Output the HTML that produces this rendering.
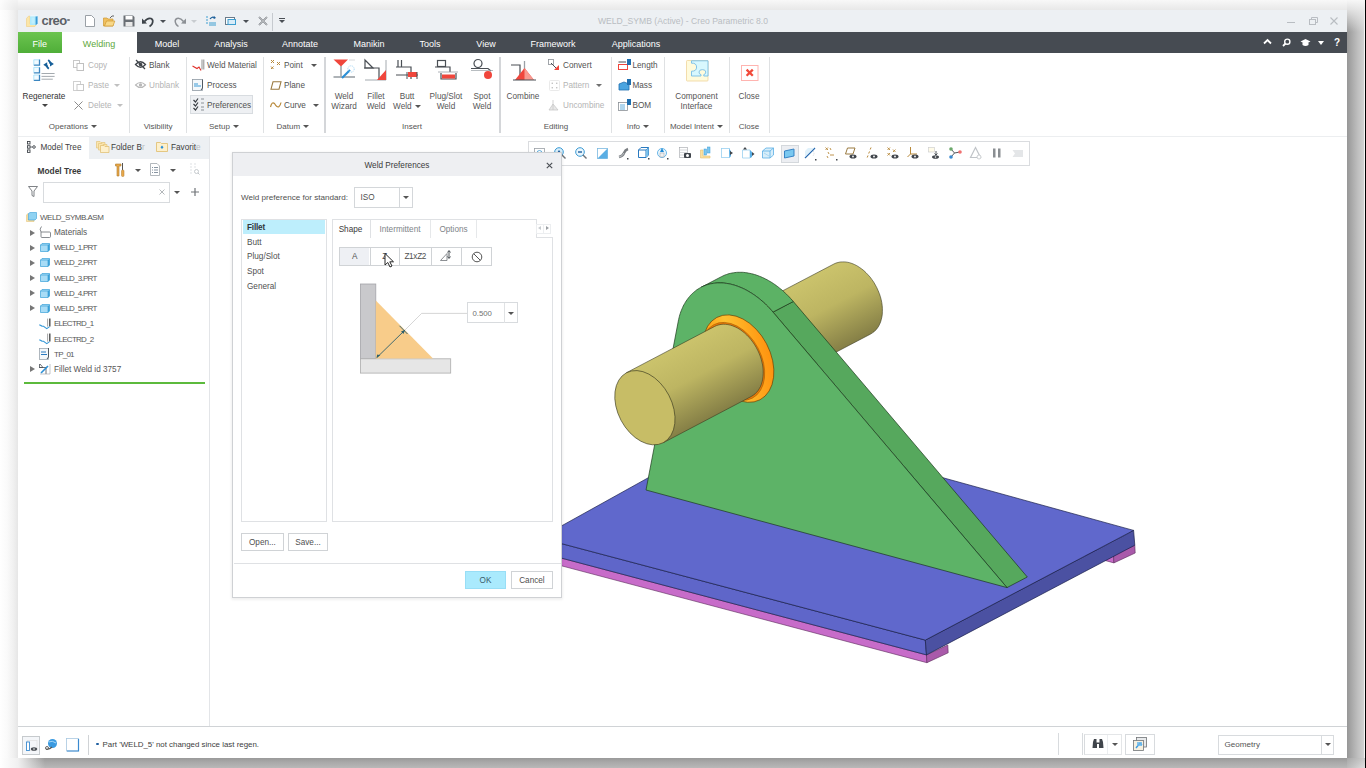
<!DOCTYPE html>
<html><head><meta charset="utf-8">
<style>
*{box-sizing:border-box;margin:0;padding:0}
html,body{width:1366px;height:768px;overflow:hidden;background:#fff}
body{font-family:"Liberation Sans",sans-serif;font-size:8px;color:#333;position:relative}
.a{position:absolute;white-space:nowrap}
svg{position:absolute;overflow:visible}
#bgtop{left:0;top:0;width:1366px;height:10px;background:linear-gradient(#f8f8f8,#e8e8e8)}
#bgleft{left:0;top:0;width:18px;height:768px;background:linear-gradient(90deg,#ffffff,#fafafa 40%,#f0f0f0 75%,#e6e6e6)}
#bgtl{left:0;top:0;width:18px;height:10px;background:radial-gradient(circle at 100% 100%,#e8e8e8,#f2f2f2 45%,#fcfcfc 90%)}
#bgright{left:1347px;top:0;width:18px;height:758px;background:linear-gradient(rgba(247,247,247,1),rgba(235,235,235,0.85) 10px,rgba(200,200,200,0) 32px),linear-gradient(90deg,#969696,#a8a8a8 25%,#bfbfbf 60%,#d0d0d0 92%,#f4f4f4 97%,#fff)}
#bgtr{display:none}
#bgblack{left:1365px;top:0;width:1px;height:768px;background:#000}
#bgbot{left:18px;top:758px;width:1329px;height:10px;background:linear-gradient(#9a9a9a,#a8a8a8 40%,#b8b8b8)}
#bgbotl{left:0;top:758px;width:45px;height:10px;background:linear-gradient(90deg,#fff,#f0f0f0 40%,rgba(240,240,240,0))}
#bgbr{left:1347px;top:758px;width:18px;height:10px;background:linear-gradient(135deg,#a8a8a8,#c8c8c8 60%,#e0e0e0)}
.tab{top:32px;height:21px;line-height:25px;color:#fff;font-size:9px;text-align:center}
.sep{width:1px;background:#dfe1e3;top:57px;height:76px}
.gl{color:#555;font-size:8px;text-align:center;top:121.5px;height:10px;line-height:10px}
.t{color:#525252;font-size:8.2px;line-height:10px;height:10px;margin-top:0.8px}
.dis{color:#b4b4b4}
.cap{color:#555;font-size:8.2px;line-height:10px;text-align:center;margin-top:0.9px}
.dd{width:0;height:0;border-left:3px solid transparent;border-right:3px solid transparent;border-top:3px solid #555}
</style></head><body>
<div class="a" id="bgtop"></div>
<div class="a" id="bgleft"></div>
<div class="a" id="bgright"></div>
<div class="a" id="bgbot"></div>
<div class="a" id="bgbotl"></div>
<div class="a" id="bgtl"></div>
<div class="a" id="bgtr"></div>
<div class="a" id="bgbr"></div>
<div class="a" id="bgblack"></div>
<!-- window -->
<div class="a" style="left:18px;top:10px;width:1329px;height:748px;background:#fff"></div>
<!-- title bar -->
<div class="a" style="left:18px;top:10px;width:1329px;height:22px;background:#edf0f3"></div>
<svg style="left:26px;top:15px" width="12" height="12" viewBox="0 0 12 12">
 <path d="M0.5 3.5L2.5 1.2H4V9H10V10L8.8 11.5H0.5Z" fill="#fbe6a8" stroke="#f0cc80" stroke-width="0.6"/>
 <path d="M4 1.2H11.5V8.5L10 10H4Z" fill="#aeeafc"/>
 <path d="M9.6 1.2H11.5V8.5L10 10H9.6Z" fill="#3a9ad5"/><path d="M4 1.2L5 0.3H11.5L11 1.2Z" fill="#e8f8ff"/>
 <path d="M6.2 2.5V8.5M7.8 2.5V8.5" stroke="#d8f6ff" stroke-width="0.6"/>
</svg>
<div class="a" style="left:41.5px;top:12.5px;font-size:13px;font-weight:bold;color:#5b6066;letter-spacing:-0.6px;line-height:16px">creo</div><div class="a" style="left:67.3px;top:18.6px;width:2.4px;height:2.4px;border-radius:50%;background:#7a7e83"></div>
<svg style="left:85px;top:15px" width="10" height="12" viewBox="0 0 10 12"><path d="M0.5 0.5 H6.5 L9.5 3.5 V11.5 H0.5 Z" fill="#fff" stroke="#9aa0a6"/></svg>
<svg style="left:103px;top:15px" width="12" height="12" viewBox="0 0 12 12"><path d="M0.5 3 H4 L5 4 H10 V11 H0.5Z" fill="#f0c060" stroke="#d09a30" stroke-width="0.7"/><path d="M1.5 11 L3.5 6 H11.8 L10 11Z" fill="#f8d888" stroke="#d09a30" stroke-width="0.7"/><path d="M7 3 Q9 0 11 1" stroke="#555" fill="none" stroke-width="0.9"/></svg>
<svg style="left:123px;top:15px" width="12" height="12" viewBox="0 0 12 12"><path d="M0.5 0.5 H10 L11.5 2 V11.5 H0.5Z" fill="#6a6f75"/><rect x="2.5" y="1" width="7" height="3.5" fill="#fff"/><rect x="2.5" y="7" width="7" height="4.5" fill="#e8e8e8"/></svg>
<svg style="left:142px;top:16px" width="12" height="12" viewBox="0 0 12 12"><path d="M2.5 5.5Q5.5 1.5 9 2.5Q12 4 10 8Q9 9.5 7.5 10.5" stroke="#3d4349" stroke-width="1.7" fill="none"/><path d="M0 2.5L5 7.5L0 7.8Z" fill="#3d4349"/></svg>
<div class="a dd" style="left:160px;top:20px;border-top-color:#4a4f55"></div>
<svg style="left:174px;top:16px" width="12" height="12" viewBox="0 0 12 12"><path d="M9.5 5.5Q6.5 1.5 3 2.5Q0 4 2 8Q3 9.5 4.5 10.5" stroke="#8d9196" stroke-width="1.5" fill="none"/><path d="M12 2.5L7 7.5L12 7.8Z" fill="#8d9196"/></svg>
<div class="a dd" style="left:191px;top:20px;border-top-color:#c8ccd0"></div>
<svg style="left:205px;top:15px" width="12" height="12" viewBox="0 0 12 12"><path d="M1 2h2M1 5h2M1 8h2M4 10h7M4 8h7" stroke="#3d9ed0" stroke-width="1"/><path d="M5 4 Q7 1 10 3" stroke="#1c5f9a" stroke-width="1.2" fill="none"/><path d="M9 1 L11 3 L8.5 4Z" fill="#1c5f9a"/></svg>
<svg style="left:225px;top:15px" width="12" height="12" viewBox="0 0 12 12"><rect x="0.5" y="2.5" width="9" height="7" fill="#fff" stroke="#6a7b8a"/><rect x="3" y="4.5" width="7.5" height="5" fill="#d8ecf8" stroke="#3d9ed0"/></svg>
<div class="a dd" style="left:243px;top:20px;border-top-color:#4a4f55"></div>
<svg style="left:258px;top:16px" width="10" height="10" viewBox="0 0 10 10"><path d="M1 1L9 9M9 1L1 9" stroke="#6a6f75" stroke-width="1.6"/><path d="M1 1L9 9M9 1L1 9" stroke="#fff" stroke-width="0.5"/></svg>
<div class="a" style="left:272px;top:13px;width:1px;height:18px;background:#c6cacf"></div>
<div class="a" style="left:279px;top:18px;width:6px;height:1px;background:#4a4f55"></div>
<div class="a dd" style="left:279px;top:20px;border-top-color:#4a4f55"></div>
<div class="a" style="left:598px;top:16px;font-size:8.6px;color:#b9bdc2;line-height:11px">WELD_SYMB (Active) - Creo Parametric 8.0</div>
<div class="a" style="left:1287px;top:22px;width:8px;height:1px;background:#b9bdc2"></div>
<svg style="left:1309px;top:17px" width="9" height="8" viewBox="0 0 9 8"><rect x="0.5" y="2.5" width="6" height="5" fill="none" stroke="#b9bdc2"/><path d="M2.5 2.5V0.5H8.5V5.5H6.5" fill="none" stroke="#b9bdc2"/></svg>
<svg style="left:1330px;top:17px" width="8" height="8" viewBox="0 0 8 8"><path d="M0.5 0.5L7.5 7.5M7.5 0.5L0.5 7.5" stroke="#b9bdc2" stroke-width="1.1"/></svg>
<!-- tabs -->
<div class="a" style="left:18px;top:32px;width:1329px;height:21px;background:#464b52"></div>
<div class="a tab" style="left:18px;width:43.5px;background:linear-gradient(#6cc450,#4fae38)">File</div>
<div class="a tab" style="left:61.5px;width:75px;background:#fff;color:#5ea83a">Welding</div>
<div class="a tab" style="left:147px;width:40px">Model</div>
<div class="a tab" style="left:211px;width:40px">Analysis</div>
<div class="a tab" style="left:280px;width:40px">Annotate</div>
<div class="a tab" style="left:349px;width:40px">Manikin</div>
<div class="a tab" style="left:410px;width:40px">Tools</div>
<div class="a tab" style="left:466px;width:40px">View</div>
<div class="a tab" style="left:523px;width:60px">Framework</div>
<div class="a tab" style="left:606px;width:60px">Applications</div>
<svg style="left:1263px;top:38px" width="9" height="7" viewBox="0 0 9 7"><path d="M1 5.5L4.5 2L8 5.5" stroke="#fff" stroke-width="1.8" fill="none"/></svg>
<svg style="left:1282px;top:38px" width="9" height="9" viewBox="0 0 9 9"><circle cx="5.3" cy="3.7" r="2.6" stroke="#fff" stroke-width="1.4" fill="none"/><path d="M3.5 5.5L1 8" stroke="#fff" stroke-width="1.8"/></svg>
<svg style="left:1300px;top:38px" width="11" height="9" viewBox="0 0 11 9"><path d="M0.5 3.5L5.5 1L10.5 3.5L5.5 6Z" fill="#fff"/><path d="M2.5 4.5V7Q5.5 9 8.5 7V4.5" fill="#fff"/></svg>
<div class="a dd" style="left:1318px;top:41px;border-top-color:#fff;border-left-width:3.5px;border-right-width:3.5px;border-top-width:4px"></div>
<div class="a" style="left:1334px;top:36px;font-size:10px;font-weight:bold;color:#fff;line-height:14px">?</div>
<!-- ribbon -->
<div class="a" style="left:18px;top:135.5px;width:1329px;height:1px;background:#eceef0"></div>
<!-- ribbon separators -->
<div class="a sep" style="left:128.5px"></div>
<div class="a sep" style="left:185.5px"></div>
<div class="a sep" style="left:262.5px"></div>
<div class="a sep" style="left:324px;background:#d4d6d9;width:1.5px"></div>
<div class="a sep" style="left:499px;background:#d4d6d9;width:1.5px"></div>
<div class="a sep" style="left:611px"></div>
<div class="a sep" style="left:663.5px"></div>
<div class="a sep" style="left:728.5px"></div>
<div class="a sep" style="left:768.5px"></div>
<!-- Operations -->
<svg style="left:33px;top:59px" width="22" height="22" viewBox="0 0 22 22">
 <g fill="#f2fbff"><rect x="0.8" y="0.6" width="6" height="6"/><rect x="0.8" y="8.2" width="6" height="6"/><rect x="0.8" y="15.8" width="6" height="6"/></g>
 <g fill="none" stroke-width="1.3"><path d="M0.8 6.2H6.5V0.6" stroke="#3b86c0"/><path d="M0.8 13.8H6.5V8.2" stroke="#3b86c0"/><path d="M0.8 21.4H6.5V15.8" stroke="#3b86c0"/></g>
 <g fill="none" stroke="#9fe0fa" stroke-width="0.8"><path d="M0.8 6V0.8H6"/><path d="M0.8 13.6V8.4H6"/><path d="M0.8 21.2V16H6"/></g>
 <path d="M8.5 14.5H21.6M8.5 17.4H21.6M8.5 20.2H19.8" stroke="#9aa0a6" stroke-width="0.9"/>
 <path d="M13.5 6Q14.2 8.6 15.8 9.8" stroke="#17609a" stroke-width="1.9" fill="none"/><path d="M10.3 5.8L14.2 3.2V8.6Z" fill="#17609a"/>
 <path d="M17.5 4.8Q16.8 2.2 15.2 1" stroke="#17609a" stroke-width="1.9" fill="none"/><path d="M20.9 4.9L17 2.3V7.6Z" fill="#17609a"/>
</svg>
<div class="a cap" style="left:14px;top:91px;width:60px;color:#333">Regenerate</div>
<div class="a dd" style="left:41.5px;top:104px;border-top-color:#444"></div>
<svg style="left:73px;top:60px" width="11" height="11" viewBox="0 0 11 11"><rect x="0.5" y="0.5" width="6" height="7" fill="#fff" stroke="#c8c8c8"/><rect x="4" y="3.5" width="6.5" height="7" fill="#fff" stroke="#c0c0c0"/></svg>
<div class="a t dis" style="left:88px;top:60px">Copy</div>
<svg style="left:73px;top:80px" width="11" height="11" viewBox="0 0 11 11"><rect x="0.5" y="1.5" width="7" height="9" fill="#fff" stroke="#d0d0d0"/><rect x="4" y="4.5" width="6.5" height="6" fill="#fff" stroke="#c8c8c8"/></svg>
<div class="a t dis" style="left:88px;top:80.5px">Paste</div>
<div class="a dd" style="left:113.5px;top:84px;border-top-color:#c0c0c0"></div>
<svg style="left:74px;top:101px" width="9" height="9" viewBox="0 0 9 9"><path d="M0.5 0.5L8.5 8.5M8.5 0.5L0.5 8.5" stroke="#8c8c8c" stroke-width="1"/></svg>
<div class="a t dis" style="left:88px;top:100.5px">Delete</div>
<div class="a dd" style="left:117px;top:104px;border-top-color:#c0c0c0"></div>
<div class="a gl" style="left:43px;width:60px">Operations <span style="display:inline-block;width:0;height:0;border-left:3px solid transparent;border-right:3px solid transparent;border-top:3.5px solid #555;vertical-align:middle;margin-left:1px"></span></div>
<!-- Visibility -->
<svg style="left:135px;top:59px" width="11" height="11" viewBox="0 0 11 11"><path d="M0.5 5.5Q5.5 0 10.5 5.5Q5.5 11 0.5 5.5Z" fill="none" stroke="#40454b" stroke-width="1.3"/><circle cx="5.5" cy="5.5" r="1.8" fill="#40454b"/><path d="M1 1L10 10" stroke="#40454b" stroke-width="1.3"/></svg>
<div class="a t" style="left:149px;top:60px">Blank</div>
<svg style="left:135px;top:81px" width="11" height="8" viewBox="0 0 11 8"><path d="M0.5 4Q5.5 -1 10.5 4Q5.5 9 0.5 4Z" fill="none" stroke="#b8b8b8" stroke-width="1.1"/><circle cx="5.5" cy="4" r="1.7" fill="#b8b8b8"/></svg>
<div class="a t dis" style="left:149px;top:80.5px">Unblank</div>
<div class="a gl" style="left:138px;width:40px">Visibility</div>
<!-- Setup -->
<svg style="left:192px;top:59px" width="13" height="12" viewBox="0 0 13 12"><path d="M0.5 7L5 9.5L7 8L9 11.5" stroke="#e0302a" stroke-width="1.1" fill="none"/><path d="M10 0.5V10.5M11.8 0.5V10.5" stroke="#707070" stroke-width="0.8"/></svg>
<div class="a t" style="left:207px;top:60px">Weld Material</div>
<svg style="left:192px;top:79px" width="13" height="12" viewBox="0 0 13 12"><rect x="0.5" y="0.5" width="10" height="11" fill="#f4f8fb" stroke="#909aa3" stroke-width="0.8"/><path d="M2 5H6M2 7H9" stroke="#3a9ad5" stroke-width="1"/><path d="M10.5 0.5V9L9 11" stroke="#505a62" stroke-width="1" fill="none"/></svg>
<div class="a t" style="left:207px;top:80px">Process</div>
<div class="a" style="left:189.5px;top:95px;width:63.5px;height:19px;background:#eef0f3;border:1px solid #d8dce0"></div>
<svg style="left:193px;top:98px" width="12" height="13" viewBox="0 0 12 13"><path d="M0.5 2L2.5 4L5 0.5M0.5 6L2.5 8L5 4.5M0.5 10L2.5 12L5 8.5" stroke="#3a3f45" stroke-width="1.2" fill="none"/><path d="M8 1H11M8 5H11M8 9H11M8 12H11" stroke="#8a9096" stroke-width="1"/></svg>
<div class="a t" style="left:207px;top:100px">Preferences</div>
<div class="a gl" style="left:199px;width:50px">Setup <span style="display:inline-block;width:0;height:0;border-left:3px solid transparent;border-right:3px solid transparent;border-top:3.5px solid #555;vertical-align:middle;margin-left:1px"></span></div>
<!-- Datum -->
<svg style="left:270px;top:59px" width="12" height="12" viewBox="0 0 12 12"><path d="M1 1L4 4M4 1L1 4M7 3L10 6M10 3L7 6M1 7.5L3.5 10M3.5 7.5L1 10" stroke="#b8893a" stroke-width="1"/></svg>
<div class="a t" style="left:284px;top:60px">Point</div>
<div class="a dd" style="left:311px;top:64px;border-top-color:#555"></div>
<svg style="left:270px;top:81px" width="12" height="9" viewBox="0 0 12 9"><path d="M3 0.8H11L9 8.2H1Z" fill="none" stroke="#9a7a40" stroke-width="1.1"/></svg>
<div class="a t" style="left:284px;top:80.5px">Plane</div>
<svg style="left:270px;top:101px" width="12" height="8" viewBox="0 0 12 8"><path d="M0.5 6Q2 0 4.5 2.5Q7 7 9 5.5Q10.5 4 11 1.5" stroke="#b8893a" stroke-width="1.2" fill="none"/></svg>
<div class="a t" style="left:284px;top:100.5px">Curve</div>
<div class="a dd" style="left:312.5px;top:104px;border-top-color:#555"></div>
<div class="a gl" style="left:268px;width:50px">Datum <span style="display:inline-block;width:0;height:0;border-left:3px solid transparent;border-right:3px solid transparent;border-top:3.5px solid #555;vertical-align:middle;margin-left:1px"></span></div>
<!-- Insert -->
<svg style="left:333px;top:59px" width="23" height="22" viewBox="0 0 23 22">
 <path d="M0.5 0.5H15L8 7.5Z" fill="#f0463c"/><path d="M8 7V17.5" stroke="#9aa0a6" stroke-width="1.5"/><path d="M16 1H22" stroke="#d8dadc" stroke-width="1"/>
 <path d="M0.5 18H22" stroke="#9aa0a6" stroke-width="1.6"/><path d="M9 19L17 11" stroke="#2b8fd6" stroke-width="2.2"/><circle cx="18" cy="10" r="3.2" fill="none" stroke="#9fd4f4" stroke-width="1" stroke-dasharray="1 1"/>
</svg>
<div class="a cap" style="left:324px;top:91px;width:40px">Weld<br>Wizard</div>
<svg style="left:364px;top:59px" width="23" height="22" viewBox="0 0 23 22">
 <path d="M1 1V9H9L1 1Z" fill="none" stroke="#4a4f55" stroke-width="1.2"/><path d="M0 9H15V20" fill="none" stroke="#4a4f55" stroke-width="1.2"/>
 <path d="M22 1V21H1" fill="none" stroke="#9aa0a6" stroke-width="0.9"/><path d="M22 11V21H13Z" fill="#f0463c"/>
</svg>
<div class="a cap" style="left:356px;top:91px;width:40px">Fillet<br>Weld</div>
<svg style="left:396px;top:59px" width="23" height="22" viewBox="0 0 23 22">
 <path d="M2 1V8M5.5 1V8M0 8H15V20" fill="none" stroke="#4a4f55" stroke-width="1.2"/><path d="M0 16H22" stroke="#4a4f55" stroke-width="1"/>
 <rect x="12" y="13" width="9" height="5" fill="#f0463c"/><path d="M11 13V20M21 13V20" stroke="#4a4f55" stroke-width="1"/>
</svg>
<div class="a cap" style="left:387px;top:91px;width:40px">Butt<br>Weld <span style="display:inline-block;width:0;height:0;border-left:3px solid transparent;border-right:3px solid transparent;border-top:3.5px solid #555;vertical-align:middle;margin-left:1px"></span></div>
<svg style="left:435px;top:59px" width="23" height="22" viewBox="0 0 23 22">
 <rect x="2.5" y="1.5" width="8" height="6" fill="none" stroke="#4a4f55" stroke-width="1.2"/><path d="M0 8H15V13" fill="none" stroke="#4a4f55" stroke-width="1.2"/>
 <path d="M6 14V20H21V14" fill="none" stroke="#4a4f55" stroke-width="1.2"/><path d="M3 13H23" stroke="#9aa0a6" stroke-width="0.8"/><rect x="7" y="15.5" width="13" height="4" fill="#f0463c"/>
</svg>
<div class="a cap" style="left:426px;top:91px;width:40px">Plug/Slot<br>Weld</div>
<svg style="left:471px;top:59px" width="23" height="22" viewBox="0 0 23 22">
 <circle cx="7" cy="4.5" r="4" fill="none" stroke="#4a4f55" stroke-width="1.2"/><path d="M0 9.5H17L20 12" fill="none" stroke="#4a4f55" stroke-width="1.2"/><path d="M0 11.5H22" stroke="#9aa0a6" stroke-width="0.7"/>
 <circle cx="17" cy="16" r="4" fill="#f0463c"/>
</svg>
<div class="a cap" style="left:462px;top:91px;width:40px">Spot<br>Weld</div>
<div class="a gl" style="left:392px;width:40px">Insert</div>
<!-- Editing -->
<svg style="left:511px;top:61px" width="26" height="20" viewBox="0 0 26 20">
 <path d="M0 4H9V19" fill="none" stroke="#4a4f55" stroke-width="1.2"/><path d="M13.5 0V19" stroke="#9aa0a6" stroke-width="1.3"/>
 <path d="M13.5 7L23 19H4Z" fill="#f0463c"/><path d="M13.5 7L23 19H13.5Z" fill="#f89a90"/><path d="M2 19H25" stroke="#4a4f55" stroke-width="1"/>
</svg>
<div class="a cap" style="left:498px;top:91px;width:50px">Combine</div>
<svg style="left:548px;top:59px" width="12" height="12" viewBox="0 0 12 12"><rect x="0.5" y="0.5" width="5" height="5" fill="#fff" stroke="#8a9096" stroke-width="0.8"/><path d="M3 4L9 10" stroke="#4a4f55" stroke-width="1"/><path d="M6 11H11V6Z" fill="#f0463c"/></svg>
<div class="a t" style="left:563px;top:60px">Convert</div>
<svg style="left:549px;top:79.5px" width="11" height="11" viewBox="0 0 11 11"><rect x="0.5" y="0.5" width="10" height="10" rx="1" fill="none" stroke="#e4e4e4" stroke-width="0.8"/><g fill="#c4c4c4"><rect x="2.6" y="2.6" width="1.4" height="1.4"/><rect x="7" y="2.6" width="1.4" height="1.4"/><rect x="2.6" y="7" width="1.4" height="1.4"/><rect x="7" y="7" width="1.4" height="1.4"/></g></svg>
<div class="a t dis" style="left:563px;top:80.5px">Pattern</div>
<div class="a dd" style="left:596px;top:84px;border-top-color:#707070"></div>
<svg style="left:548px;top:100px" width="12" height="11" viewBox="0 0 12 11"><path d="M5 0V10M5 4L10 10H1Z" fill="#e8e8e8" stroke="#c8c8c8" stroke-width="0.8"/></svg>
<div class="a t dis" style="left:563px;top:100.5px">Uncombine</div>
<div class="a gl" style="left:531px;width:50px">Editing</div>
<!-- Info -->
<svg style="left:618px;top:59px" width="13" height="11" viewBox="0 0 13 11"><rect x="0.5" y="5.5" width="9" height="5" fill="#fff" stroke="#f0463c" stroke-width="1"/><path d="M0.5 3H8" stroke="#4a4f55" stroke-width="1"/><rect x="9" y="0" width="4" height="6" fill="#1f6fb0"/></svg>
<div class="a t" style="left:632.5px;top:60px">Length</div>
<svg style="left:618px;top:79px" width="13" height="12" viewBox="0 0 13 12"><path d="M1 5L6 3L11 5V11H1Z" fill="#4aa4e0" stroke="#1f6fb0" stroke-width="0.8"/><rect x="9" y="0" width="4" height="6" fill="#1f6fb0"/></svg>
<div class="a t" style="left:632.5px;top:80.5px">Mass</div>
<svg style="left:618px;top:99px" width="13" height="12" viewBox="0 0 13 12"><rect x="0.5" y="3.5" width="9" height="8" fill="#fff" stroke="#8a9096" stroke-width="0.8"/><path d="M2 6H7M2 8H7M2 10H7" stroke="#3a9ad5" stroke-width="0.8"/><rect x="9" y="0" width="4" height="6" fill="#1f6fb0"/></svg>
<div class="a t" style="left:632.5px;top:100.5px">BOM</div>
<div class="a gl" style="left:618px;width:40px">Info <span style="display:inline-block;width:0;height:0;border-left:3px solid transparent;border-right:3px solid transparent;border-top:3.5px solid #555;vertical-align:middle;margin-left:1px"></span></div>
<!-- Model Intent -->
<svg style="left:685.5px;top:59.5px" width="23" height="22" viewBox="0 0 23 22">
 <rect x="0.5" y="0.5" width="21.5" height="20.5" rx="0.8" fill="#fffbdc" stroke="#f0d49a" stroke-width="0.8"/>
 <path d="M5.5 0.8H22V16H17.8V14.6Q19.8 14.2 19.8 12Q19.6 9.6 16.4 9.6Q13.2 9.6 13 12Q13 14.2 15 14.6V16H5.5V11.2Q10.6 11.4 10.6 7Q10.4 2.8 5.5 3.2Z" fill="#d8f8fe" stroke="#78bde6" stroke-width="0.9" stroke-linejoin="round"/>
</svg>
<div class="a cap" style="left:666.5px;top:91px;width:60px">Component<br>Interface</div>
<div class="a gl" style="left:661.5px;width:70px">Model Intent <span style="display:inline-block;width:0;height:0;border-left:3px solid transparent;border-right:3px solid transparent;border-top:3.5px solid #555;vertical-align:middle;margin-left:1px"></span></div>
<!-- Close -->
<svg style="left:741px;top:65.3px" width="18" height="16" viewBox="0 0 18 16"><rect x="0.5" y="0.5" width="16.5" height="15" fill="#fff" stroke="#ffb4b0" stroke-width="1"/><path d="M5.6 4.6L11.8 10.8M11.8 4.6L5.6 10.8" stroke="#f24a3a" stroke-width="2.3"/></svg>
<div class="a cap" style="left:729px;top:91px;width:40px">Close</div>
<div class="a gl" style="left:729px;width:40px">Close</div>
<!-- model tree panel -->
<div class="a" style="left:89px;top:136.5px;width:121px;height:22.5px;background:#edf0f3"></div>
<div class="a" style="left:209px;top:136px;width:1px;height:590px;background:#e3e5e8"></div>
<svg style="left:27px;top:141px" width="9" height="12" viewBox="0 0 9 12"><g fill="none" stroke="#40454b" stroke-width="0.9"><rect x="0.5" y="0.5" width="2.5" height="2.5"/><rect x="0.5" y="4.7" width="2.5" height="2.5"/><rect x="0.5" y="8.9" width="2.5" height="2.5"/><circle cx="7" cy="6" r="1.3"/></g><path d="M3 6H5.5" stroke="#40454b" stroke-width="0.8"/></svg>
<div class="a t" style="left:40.5px;top:142px;color:#404040">Model Tree</div>
<svg style="left:96px;top:140px" width="14" height="13" viewBox="0 0 14 13"><path d="M0.5 1.5H4L5 2.5H9V8H0.5Z" fill="#fbe6b0" stroke="#e4c47a" stroke-width="0.7"/><path d="M2.5 3.5H6L7 4.5H11V10H2.5Z" fill="#fbe6b0" stroke="#e4c47a" stroke-width="0.7"/><path d="M4.5 5.5H8L9 6.5H13V12.5H4.5Z" fill="#fdf0cc" stroke="#e0bc6a" stroke-width="0.7"/></svg>
<div class="a t" style="left:111px;top:142px;color:#404040">Folder B<span style="color:#b8bcc0">r</span></div>
<svg style="left:156px;top:141px" width="12" height="11" viewBox="0 0 12 11"><path d="M0.5 1.5H4.5L5.5 2.5H11.5V10.5H0.5Z" fill="#fdf0cc" stroke="#e0bc6a" stroke-width="0.8"/><path d="M6 4.5L7.5 6.2L6 8L4.5 6.2Z" fill="#2b8fd6"/></svg>
<div class="a t" style="left:171px;top:142px;color:#404040">Favorit<span style="color:#b8bcc0">e</span></div>
<div class="a" style="left:37.5px;top:165.5px;font-size:8.4px;font-weight:bold;color:#3a3a3a;line-height:10px">Model Tree</div>
<svg style="left:115px;top:163px" width="10" height="14" viewBox="0 0 10 14"><path d="M0.5 1H6V3H4V13H2V3H0.5Z" fill="#e8a84a" stroke="#b07a2a" stroke-width="0.6"/><path d="M7.5 0V7" stroke="#555" stroke-width="1"/><rect x="6.5" y="7" width="2.5" height="6.5" rx="1" fill="#e8a84a" stroke="#b07a2a" stroke-width="0.5"/></svg>
<div class="a dd" style="left:135px;top:169px;border-top-color:#555"></div>
<svg style="left:150px;top:163px" width="10" height="13" viewBox="0 0 10 13"><path d="M0.5 0.5H7L9.5 3V12.5H0.5Z" fill="#fff" stroke="#a0a6ac" stroke-width="0.8"/><path d="M2 4.5H3M4 4.5H8M2 7H3M4 7H8M2 9.5H3M4 9.5H8" stroke="#6a7a8a" stroke-width="0.8"/></svg>
<div class="a dd" style="left:169.5px;top:169px;border-top-color:#555"></div>
<svg style="left:189px;top:163px" width="11" height="12" viewBox="0 0 11 12"><path d="M1 1H3M1 4H3M1 7H3M1 10H3M5 1H7M5 4H7" stroke="#d0d4d8" stroke-width="0.7"/><circle cx="7.5" cy="8.5" r="2" fill="none" stroke="#c0c4c8" stroke-width="0.9"/><path d="M9 10L10.5 11.5" stroke="#c0c4c8"/></svg>
<svg style="left:28px;top:186px" width="10" height="11" viewBox="0 0 10 11"><path d="M0.5 0.5H9.5L6 5V10.5L4 9.5V5Z" fill="none" stroke="#707478" stroke-width="0.9"/></svg>
<div class="a" style="left:42.5px;top:181.5px;width:127px;height:21px;border:1px solid #d8dbde;background:#fff"></div>
<svg style="left:158.5px;top:189px" width="6" height="6" viewBox="0 0 6 6"><path d="M0.5 0.5L5.5 5.5M5.5 0.5L0.5 5.5" stroke="#a0a4a8" stroke-width="0.8"/></svg>
<div class="a dd" style="left:174px;top:191px;border-top-color:#555"></div>
<svg style="left:190.5px;top:188px" width="8" height="8" viewBox="0 0 8 8"><path d="M4 0V8M0 4H8" stroke="#707478" stroke-width="1.2"/></svg>
<!-- tree items -->
<svg style="left:26px;top:212px" width="11" height="10" viewBox="0 0 11 10"><path d="M0.5 3L2 1.5V8H8V9.5H0.5Z" fill="#fbe6b0" stroke="#e4c47a" stroke-width="0.6"/><path d="M2.5 1.5L4 0.5H10.5V6.5L9 8H2.5Z" fill="#8fd2f2" stroke="#3aa0d8" stroke-width="0.6"/></svg>
<div class="a t" style="left:40px;top:212.3px;color:#575757;letter-spacing:-0.5px;font-size:8px">WELD_SYMB.ASM</div>
<div class="a" style="left:30px;top:229.5px;width:0;height:0;border-top:3px solid transparent;border-bottom:3px solid transparent;border-left:5px solid #777"></div>
<svg style="left:39px;top:226px" width="12" height="12" viewBox="0 0 12 12"><path d="M2.5 0.5Q0 3 2 6H10.5Q11.5 6 11.5 7V10.5Q11.5 11.5 10.5 11.5H3Q2 11.5 2 10.5V6" fill="none" stroke="#6a6f75" stroke-width="0.8"/></svg>
<div class="a t" style="left:54px;top:227.3px;color:#575757">Materials</div>
<div class="a" style="left:30px;top:244.5px;width:0;height:0;border-top:3px solid transparent;border-bottom:3px solid transparent;border-left:5px solid #777"></div>
<svg style="left:40px;top:243.0px" width="10" height="9" viewBox="0 0 10 9"><path d="M0.5 2L2 0.5H9.5V7L8 8.5H0.5Z" fill="#a8dcf6" stroke="#3aa0d8" stroke-width="0.7"/><path d="M8 2V8.5M0.5 2H8" stroke="#3aa0d8" stroke-width="0.7"/><path d="M8 2L9.5 0.5V7L8 8.5Z" fill="#3aa0d8"/></svg>
<div class="a t" style="left:54px;top:242.5px;color:#575757;letter-spacing:-0.75px;font-size:8px">WELD_1.PRT</div>
<div class="a" style="left:30px;top:259.7px;width:0;height:0;border-top:3px solid transparent;border-bottom:3px solid transparent;border-left:5px solid #777"></div>
<svg style="left:40px;top:258.2px" width="10" height="9" viewBox="0 0 10 9"><path d="M0.5 2L2 0.5H9.5V7L8 8.5H0.5Z" fill="#a8dcf6" stroke="#3aa0d8" stroke-width="0.7"/><path d="M8 2V8.5M0.5 2H8" stroke="#3aa0d8" stroke-width="0.7"/><path d="M8 2L9.5 0.5V7L8 8.5Z" fill="#3aa0d8"/></svg>
<div class="a t" style="left:54px;top:257.7px;color:#575757;letter-spacing:-0.75px;font-size:8px">WELD_2.PRT</div>
<div class="a" style="left:30px;top:274.9px;width:0;height:0;border-top:3px solid transparent;border-bottom:3px solid transparent;border-left:5px solid #777"></div>
<svg style="left:40px;top:273.4px" width="10" height="9" viewBox="0 0 10 9"><path d="M0.5 2L2 0.5H9.5V7L8 8.5H0.5Z" fill="#a8dcf6" stroke="#3aa0d8" stroke-width="0.7"/><path d="M8 2V8.5M0.5 2H8" stroke="#3aa0d8" stroke-width="0.7"/><path d="M8 2L9.5 0.5V7L8 8.5Z" fill="#3aa0d8"/></svg>
<div class="a t" style="left:54px;top:272.9px;color:#575757;letter-spacing:-0.75px;font-size:8px">WELD_3.PRT</div>
<div class="a" style="left:30px;top:290.1px;width:0;height:0;border-top:3px solid transparent;border-bottom:3px solid transparent;border-left:5px solid #777"></div>
<svg style="left:40px;top:288.6px" width="10" height="9" viewBox="0 0 10 9"><path d="M0.5 2L2 0.5H9.5V7L8 8.5H0.5Z" fill="#a8dcf6" stroke="#3aa0d8" stroke-width="0.7"/><path d="M8 2V8.5M0.5 2H8" stroke="#3aa0d8" stroke-width="0.7"/><path d="M8 2L9.5 0.5V7L8 8.5Z" fill="#3aa0d8"/></svg>
<div class="a t" style="left:54px;top:288.1px;color:#575757;letter-spacing:-0.75px;font-size:8px">WELD_4.PRT</div>
<div class="a" style="left:30px;top:305.3px;width:0;height:0;border-top:3px solid transparent;border-bottom:3px solid transparent;border-left:5px solid #777"></div>
<svg style="left:40px;top:303.8px" width="10" height="9" viewBox="0 0 10 9"><path d="M0.5 2L2 0.5H9.5V7L8 8.5H0.5Z" fill="#a8dcf6" stroke="#3aa0d8" stroke-width="0.7"/><path d="M8 2V8.5M0.5 2H8" stroke="#3aa0d8" stroke-width="0.7"/><path d="M8 2L9.5 0.5V7L8 8.5Z" fill="#3aa0d8"/></svg>
<div class="a t" style="left:54px;top:303.3px;color:#575757;letter-spacing:-0.75px;font-size:8px">WELD_5.PRT</div>
<svg style="left:39px;top:317.6px" width="12" height="12" viewBox="0 0 12 12"><path d="M8.6 0.6V8.6" stroke="#9a9a9a" stroke-width="0.9"/><path d="M10.8 0.6V8.4" stroke="#4a4a4a" stroke-width="1.4"/><path d="M0.3 6.8L3 8.1L4.5 8.3L7.8 10.6L10.6 8.6" stroke="#3a9ad8" stroke-width="1.1" fill="none"/></svg>
<div class="a t" style="left:54px;top:318.6px;color:#575757;letter-spacing:-0.75px;font-size:8px">ELECTRD_1</div>
<svg style="left:39px;top:332.8px" width="12" height="12" viewBox="0 0 12 12"><path d="M8.6 0.6V8.6" stroke="#9a9a9a" stroke-width="0.9"/><path d="M10.8 0.6V8.4" stroke="#4a4a4a" stroke-width="1.4"/><path d="M0.3 6.8L3 8.1L4.5 8.3L7.8 10.6L10.6 8.6" stroke="#3a9ad8" stroke-width="1.1" fill="none"/></svg>
<div class="a t" style="left:54px;top:333.8px;color:#575757;letter-spacing:-0.75px;font-size:8px">ELECTRD_2</div>
<svg style="left:39px;top:348px" width="12" height="12" viewBox="0 0 12 12"><rect x="0.5" y="0.5" width="9" height="11" fill="#f4f8fb" stroke="#909aa3" stroke-width="0.7"/><path d="M2 4H7M2 6.5H8" stroke="#2a7ac0" stroke-width="1"/><path d="M9.5 0V9L8 11" stroke="#505a62" stroke-width="1" fill="none"/></svg>
<div class="a t" style="left:54px;top:349px;color:#575757;letter-spacing:-0.75px;font-size:8px">TP_01</div>
<div class="a" style="left:30px;top:366.2px;width:0;height:0;border-top:3px solid transparent;border-bottom:3px solid transparent;border-left:5px solid #777"></div>
<svg style="left:39px;top:363px" width="12" height="12" viewBox="0 0 12 12"><path d="M0.5 1V4.5H4L1 1" fill="none" stroke="#4a4f55" stroke-width="0.8"/><path d="M0 4.5H7V11" fill="none" stroke="#4a4f55" stroke-width="0.8"/><path d="M2 10L9 3" stroke="#2b8fd6" stroke-width="1.6"/><path d="M11 1V11H1" fill="none" stroke="#9aa0a6" stroke-width="0.6"/></svg>
<div class="a t" style="left:54px;top:364.2px;color:#575757">Fillet Weld id 3757</div>
<div class="a" style="left:24px;top:382px;width:181px;height:2px;background:#5cba3c"></div>
<svg style="left:0;top:0" width="1366" height="768" viewBox="0 0 1366 768"><defs>
<linearGradient id="cylg" gradientUnits="userSpaceOnUse" x1="626.5" y1="372.7" x2="663.3" y2="442.7">
<stop offset="0" stop-color="#cbc36c"/><stop offset="0.45" stop-color="#bdb562"/><stop offset="1" stop-color="#857f46"/></linearGradient>
<linearGradient id="ringg" gradientUnits="userSpaceOnUse" x1="717.5" y1="318.8" x2="698.6" y2="379.5">
<stop offset="0" stop-color="#ff9410"/><stop offset="0.6" stop-color="#ffc030"/><stop offset="1" stop-color="#ff9a10"/></linearGradient>
<linearGradient id="cylg2" gradientUnits="userSpaceOnUse" x1="833.9" y1="264.0" x2="870.7" y2="334.0">
<stop offset="0" stop-color="#cbc36c"/><stop offset="0.45" stop-color="#bdb562"/><stop offset="1" stop-color="#857f46"/></linearGradient></defs>
<polygon points="541.1,552.7 926.5,654.9 926.9,662.7 541.5,560.5" fill="#c76cc9" stroke="#5a2a5a" stroke-width="0.6" stroke-linejoin="round" />
<polygon points="926.5,654.9 947.8,645.0 948.2,652.8 926.9,662.7" fill="#a95aaa" stroke="#5a2a5a" stroke-width="0.6" stroke-linejoin="round" />
<polygon points="726.1,448.1 1113.5,555.1 1113.9,562.9 726.5,455.9" fill="#c76cc9" stroke="#5a2a5a" stroke-width="0.6" stroke-linejoin="round" />
<polygon points="1113.5,555.1 1134.8,545.2 1135.2,553.0 1113.9,562.9" fill="#a95aaa" stroke="#5a2a5a" stroke-width="0.6" stroke-linejoin="round" />
<polygon points="539.9,537.9 925.3,640.1 926.5,654.9 541.1,552.7" fill="#5f66c9" stroke="#1a1f4a" stroke-width="0.7" stroke-linejoin="round" />
<polygon points="925.3,640.1 1133.6,530.4 1134.8,545.2 926.5,654.9" fill="#4b51a2" stroke="#1a1f4a" stroke-width="0.7" stroke-linejoin="round" />
<polygon points="539.9,537.9 925.3,640.1 1133.6,530.4 746.2,423.4" fill="#6068cc" stroke="#1a1f4a" stroke-width="0.7" stroke-linejoin="round" />
<polygon points="740.3,313.0 833.9,264.0 833.9,264.0 835.9,263.1 838.0,262.5 840.2,262.0 842.5,261.9 844.8,261.9 847.2,262.2 849.6,262.7 852.0,263.5 854.4,264.5 856.8,265.7 859.2,267.2 861.5,268.8 863.8,270.6 866.0,272.7 868.1,274.9 870.2,277.2 872.0,279.7 873.8,282.3 875.4,285.1 876.9,287.9 878.2,290.8 879.4,293.7 880.4,296.7 881.2,299.7 881.8,302.7 882.2,305.6 882.4,308.5 882.4,311.4 882.3,314.2 881.9,316.9 881.3,319.4 880.6,321.9 879.7,324.1 878.6,326.3 877.3,328.2 875.8,330.0 874.3,331.5 872.5,332.8 870.7,334.0 870.7,334.0 777.1,383.0" fill="url(#cylg2)" stroke="#3a3a20" stroke-width="0.6" stroke-linejoin="round" />
<polygon points="773.0,312.1 1007.0,587.6 1027.3,577.0 793.3,301.5" fill="#56a85d" stroke="#1d3a1d" stroke-width="0.7" stroke-linejoin="round" />
<polygon points="701.1,287.3 702.3,286.7 703.6,286.1 704.9,285.5 706.2,285.1 707.6,284.6 708.9,284.2 710.3,283.9 711.7,283.6 713.2,283.4 714.6,283.2 716.0,283.0 717.5,282.9 719.0,282.9 720.5,282.9 722.0,282.9 723.5,283.0 725.0,283.2 726.6,283.4 728.1,283.7 729.7,284.0 731.2,284.3 732.8,284.7 734.3,285.1 735.9,285.6 737.5,286.2 739.0,286.8 740.6,287.4 742.2,288.1 743.7,288.8 745.3,289.6 746.9,290.4 748.4,291.3 750.0,292.2 751.5,293.1 753.0,294.1 754.5,295.1 756.0,296.2 757.5,297.3 759.0,298.5 760.5,299.7 762.0,300.9 763.4,302.2 764.8,303.5 766.2,304.8 767.6,306.2 769.0,307.6 770.3,309.1 771.7,310.6 773.0,312.1 793.3,301.5 792.0,300.0 790.6,298.5 789.3,297.0 787.9,295.6 786.5,294.2 785.1,292.9 783.7,291.6 782.3,290.3 780.8,289.1 779.3,287.9 777.8,286.7 776.3,285.6 774.8,284.5 773.3,283.5 771.8,282.5 770.3,281.6 768.7,280.7 767.2,279.8 765.6,279.0 764.0,278.2 762.5,277.5 760.9,276.8 759.3,276.2 757.8,275.6 756.2,275.0 754.6,274.5 753.1,274.1 751.5,273.7 750.0,273.4 748.4,273.1 746.9,272.8 745.3,272.6 743.8,272.4 742.3,272.3 740.8,272.3 739.3,272.3 737.8,272.3 736.3,272.4 734.9,272.6 733.5,272.8 732.0,273.0 730.6,273.3 729.2,273.6 727.9,274.0 726.5,274.5 725.2,274.9 723.9,275.5 722.6,276.1 721.4,276.7" fill="#5cb265" stroke="#1d3a1d" stroke-width="0.7" stroke-linejoin="round" />
<polygon points="646.0,490.0 1007.0,587.6 773.0,312.1 771.7,310.6 770.4,309.2 769.1,307.8 767.8,306.4 766.4,305.0 765.1,303.7 763.7,302.4 762.3,301.2 760.9,300.0 759.4,298.8 758.0,297.7 756.5,296.6 755.1,295.5 753.6,294.5 752.1,293.5 750.6,292.6 749.1,291.7 747.6,290.8 746.1,290.0 744.6,289.2 743.1,288.5 741.6,287.8 740.0,287.2 738.5,286.6 737.0,286.0 735.5,285.5 733.9,285.0 732.4,284.6 730.9,284.2 729.4,283.9 727.9,283.6 726.4,283.4 724.9,283.2 723.4,283.0 721.9,282.9 720.5,282.9 719.0,282.9 717.6,282.9 716.2,283.0 714.7,283.2 713.3,283.3 712.0,283.6 710.6,283.8 709.2,284.2 707.9,284.5 706.6,284.9 705.3,285.4 704.0,285.9 702.8,286.4 701.5,287.0 700.3,287.7 699.1,288.4 698.0,289.1 696.8,289.8 695.7,290.7 694.7,291.5 693.6,292.4 692.6,293.3 691.6,294.3 690.6,295.3 689.7,296.4 688.7,297.5 687.9,298.6 687.0,299.8 686.2,301.0 685.4,302.2 684.7,303.5 683.9,304.8 683.2,306.1 682.6,307.5 682.0,308.9 681.4,310.3 680.8,311.8 680.3,313.3 679.8,314.8 679.4,316.3 679.0,317.9 678.6,319.5 678.3,321.1" fill="#5db367" stroke="#1d3a1d" stroke-width="0.7" stroke-linejoin="round" />
<ellipse cx="738.4" cy="358.6" rx="46.5" ry="31.8" transform="rotate(62.30 738.4 358.6)" fill="url(#ringg)" stroke="#6a3a00" stroke-width="0.6"/>
<ellipse cx="733.1" cy="361.4" rx="41.5" ry="28.3" transform="rotate(62.30 733.1 361.4)" fill="#e87a08" stroke="#8a4a00" stroke-width="0.4"/>
<polygon points="626.5,372.7 714.7,326.4 714.7,326.4 716.7,325.5 718.8,324.9 721.0,324.4 723.2,324.2 725.6,324.3 727.9,324.6 730.3,325.1 732.8,325.9 735.2,326.9 737.6,328.1 740.0,329.5 742.3,331.2 744.6,333.0 746.8,335.1 748.9,337.2 750.9,339.6 752.8,342.1 754.6,344.7 756.2,347.4 757.7,350.3 759.0,353.1 760.2,356.1 761.2,359.1 761.9,362.1 762.6,365.0 763.0,368.0 763.2,370.9 763.2,373.8 763.0,376.6 762.7,379.2 762.1,381.8 761.4,384.2 760.5,386.5 759.3,388.6 758.1,390.6 756.6,392.3 755.0,393.9 753.3,395.2 751.4,396.4 751.4,396.4 663.3,442.7" fill="url(#cylg)" stroke="#3a3a20" stroke-width="0.6" stroke-linejoin="round" />
<ellipse cx="644.9" cy="407.7" rx="39.5" ry="27.0" transform="rotate(62.30 644.9 407.7)" fill="#c7bd66" stroke="#3a3a20" stroke-width="0.6"/></svg>
<!-- view toolbar -->
<div class="a" style="left:528px;top:141px;width:502px;height:24.5px;border:1px solid #dadcdf;background:#fff"></div>
<div class="a" style="left:780.5px;top:144.5px;width:18px;height:18px;background:#eceef2;border:1px solid #d4d8dc"></div>
<svg style="left:0;top:0" width="1366" height="200" viewBox="0 0 1366 200">
 <g transform="translate(534,148)"><rect x="0.5" y="0.5" width="10" height="9" fill="#fff" stroke="#9aa0a6" stroke-width="0.8"/><circle cx="5.5" cy="5" r="2.5" fill="none" stroke="#3a9ad5" stroke-width="0.8"/></g>
 <g transform="translate(554,147)"><circle cx="5" cy="5" r="4.3" fill="#d8eefa" stroke="#3a9ad5" stroke-width="1"/><path d="M3 6L5 3L7 6Z" fill="#1f5fa0"/><path d="M8 8L11.5 11.5" stroke="#707478" stroke-width="1.4"/></g>
 <g transform="translate(575,147)"><circle cx="5" cy="5" r="4.3" fill="#eaf6fc" stroke="#3a9ad5" stroke-width="1"/><path d="M3 5H7" stroke="#1f5fa0" stroke-width="1.4"/><path d="M8 8L11.5 11.5" stroke="#707478" stroke-width="1.4"/></g>
 <g transform="translate(597,148)"><rect x="0.5" y="0.5" width="10" height="10" fill="#fff" stroke="#7ab8e0" stroke-width="0.8"/><path d="M0.5 10.5L10.5 0.5V10.5Z" fill="#5aaee4"/></g>
 <g transform="translate(617,147)"><path d="M2 10Q6 9 7 6Q8 3 11 2" stroke="#7a7e82" stroke-width="2.4" fill="none"/><path d="M2 10Q6 9 7 6" stroke="#c0c4c8" stroke-width="1" fill="none"/><rect x="10" y="11" width="1.5" height="1.5" fill="#40454b"/></g>
 <g transform="translate(638,147)"><path d="M0.5 3L3 0.5H10.5V8L8 10.5H0.5Z" fill="#fff" stroke="#2a7ac0" stroke-width="1"/><path d="M0.5 3H8V10.5M8 3L10.5 0.5" stroke="#2a7ac0" stroke-width="1" fill="none"/><path d="M8 3L10.5 0.5V8L8 10.5Z" fill="#7ac0ea"/><rect x="10" y="11" width="1.5" height="1.5" fill="#40454b"/></g>
 <g transform="translate(657,147)"><circle cx="5" cy="6" r="4.5" fill="#eaf6fc" stroke="#5aaee4" stroke-width="0.9"/><path d="M5 1L7 5H3Z" fill="#1f8ad6"/><rect x="3" y="6" width="4" height="4" fill="#f0f0f0" stroke="#9aa0a6" stroke-width="0.5"/><rect x="10" y="11" width="1.5" height="1.5" fill="#40454b"/></g>
 <g transform="translate(679,147)"><rect x="0.5" y="0.5" width="8" height="10" fill="#fff" stroke="#a0a4a8" stroke-width="0.6"/><path d="M1 3H8M1 5.5H8M1 8H8" stroke="#b8bcc0" stroke-width="0.6"/><rect x="5" y="6" width="7" height="5" rx="1" fill="#40454b"/><circle cx="8.5" cy="8.5" r="1.5" fill="#fff"/></g>
 <g transform="translate(700,147)"><path d="M0.5 3V11H10V9H3V3Z" fill="#fbe2a0" stroke="#e8c070" stroke-width="0.6"/><rect x="4" y="2" width="2.5" height="6" fill="#7ac8f0" stroke="#3a9ad5" stroke-width="0.5"/><rect x="7.5" y="0" width="2.5" height="6" fill="#7ac8f0" stroke="#3a9ad5" stroke-width="0.5"/></g>
 <g transform="translate(721,148)"><rect x="0.5" y="0.5" width="8" height="9" fill="#fff" stroke="#9ad0f0" stroke-width="0.8"/><path d="M8 1L10 3V8L8.5 10Z" fill="#5aaee4"/><path d="M9 3L12 5L9 7Z" fill="#40454b"/></g>
 <g transform="translate(742,147)"><path d="M0.5 3H8V11H0.5Z" fill="#fff" stroke="#9ad0f0" stroke-width="0.8"/><path d="M3 0L5 2.5H1Z" fill="#40454b"/><path d="M8 3L10 5V10L8 11Z" fill="#5aaee4"/><path d="M10 5L12.5 7L10 9Z" fill="#40454b"/></g>
 <g transform="translate(762,147)"><path d="M0.5 4L4 1H11.5V8L8 11H0.5Z" fill="#d8eefa" stroke="#5aaee4" stroke-width="0.8"/><path d="M0.5 4H8V11M8 4L11.5 1" stroke="#5aaee4" stroke-width="0.8" fill="none"/><path d="M2 6L7 9" stroke="#9ad0f0" stroke-width="0.8"/></g>
 <g transform="translate(784,148)"><path d="M0.5 3L10 1V8L0.5 10Z" fill="#7ac8f0" stroke="#2a7ac0" stroke-width="0.9"/></g>
 <g transform="translate(804,147)"><path d="M1 11L11 1" stroke="#2a6ab0" stroke-width="1.2"/><path d="M1 4L4 1H10L1 10Z" fill="#d8eefa" opacity="0.8"/><path d="M9 4Q11 6 9 9" stroke="#c8ccd0" stroke-width="0.8" fill="none" stroke-dasharray="1 1"/><rect x="11" y="12" width="1.5" height="1.5" fill="#40454b"/></g>
 <g transform="translate(825,147)"><path d="M0.5 0.5L3 3M3 0.5L0.5 3M5 1L6 3M3 5L4 7M2 9L3 11M5 8H9" stroke="#b8893a" stroke-width="0.9"/><rect x="11" y="12" width="1.5" height="1.5" fill="#40454b"/></g>
 <g transform="translate(845,147)"><path d="M2.5 1H10L8 7H0.5Z" fill="none" stroke="#9a7a40" stroke-width="1"/><ellipse cx="8" cy="9.5" rx="3.5" ry="2" fill="#40454b"/><circle cx="8" cy="9.5" r="0.9" fill="#fff"/></g>
 <g transform="translate(866,147)"><path d="M5 0.5L4.2 2.5M3.5 4.5L2.7 6.5M2 8.5L1.2 10.5" stroke="#b8893a" stroke-width="1"/><ellipse cx="8" cy="9.5" rx="3.5" ry="2" fill="#40454b"/><circle cx="8" cy="9.5" r="0.9" fill="#fff"/></g>
 <g transform="translate(887,147)"><path d="M0.5 0.5L3 3M3 0.5L0.5 3M6 2.5L8.5 5M8.5 2.5L6 5M0.5 6L3 8.5M3 6L0.5 8.5" stroke="#b8893a" stroke-width="0.9"/><ellipse cx="8" cy="9.5" rx="3.5" ry="2" fill="#40454b"/><circle cx="8" cy="9.5" r="0.9" fill="#fff"/></g>
 <g transform="translate(907,147)"><path d="M3.5 0V7L0.5 10M3.5 7H10" stroke="#b8893a" stroke-width="1" fill="none"/><ellipse cx="8" cy="9.5" rx="3.5" ry="2" fill="#40454b"/><circle cx="8" cy="9.5" r="0.9" fill="#fff"/></g>
 <g transform="translate(928,147)"><rect x="0.5" y="0.5" width="6" height="4.5" fill="#fffbe8" stroke="#d0d0d0" stroke-width="0.7"/><path d="M8 4V8M6.5 6.5L8 8L9.5 6.5" stroke="#40454b" stroke-width="0.9" fill="none"/><ellipse cx="7.5" cy="10" rx="3.5" ry="1.8" fill="#40454b"/><circle cx="7.5" cy="10" r="0.8" fill="#fff"/></g>
 <g transform="translate(949,147)"><path d="M2 2L5.5 6L11 5M5.5 6L2 10" stroke="#40454b" stroke-width="0.9" fill="none"/><circle cx="2" cy="2" r="1.8" fill="#6aa86a"/><circle cx="11" cy="5" r="1.8" fill="#f07070"/><circle cx="2" cy="10" r="1.8" fill="#3a8ad0"/></g>
 <g transform="translate(970,147)"><path d="M5.5 0.5L10.5 10.5H0.5Z" fill="none" stroke="#c0c4c8" stroke-width="1.2"/><circle cx="9" cy="10" r="2" fill="#fff" stroke="#c0c4c8" stroke-width="0.8"/></g>
 <g transform="translate(992,148)"><rect x="1" y="0.5" width="2.5" height="9" fill="#8a8e92"/><rect x="6" y="0.5" width="2.5" height="9" fill="#8a8e92"/></g>
 <g transform="translate(1012,149)"><path d="M0.5 1H11V8H0.5L3 4.5Z" fill="#e4e6e8"/></g>
</svg>
<!-- dialog -->
<div class="a" style="left:231px;top:152px;width:332px;height:448px;background:rgba(0,0,0,0.06);border-radius:2px;filter:blur(0.8px)"></div>
<div class="a" style="left:232px;top:152px;width:329.5px;height:446px;background:#fff;border:1px solid #cfd1d4"></div>
<div class="a" style="left:233px;top:153px;width:327.5px;height:22.5px;background:#eeeff2"></div>
<div class="a" style="left:233.5px;top:159.5px;width:327px;text-align:center;font-size:8.2px;color:#3a3a3a;line-height:11px">Weld Preferences</div>
<svg style="left:545.5px;top:161.5px" width="7" height="7" viewBox="0 0 7 7"><path d="M0.8 0.8L6.2 6.2M6.2 0.8L0.8 6.2" stroke="#4a4f55" stroke-width="1.15"/></svg>
<div class="a t" style="left:241px;top:191.8px;color:#505050;font-size:8.1px">Weld preference for standard:</div>
<div class="a" style="left:354px;top:186.5px;width:58.5px;height:21px;border:1px solid #d4d7da"></div>
<div class="a" style="left:398.5px;top:187px;width:1px;height:20px;background:#d4d7da"></div>
<div class="a t" style="left:360.5px;top:192px;color:#505050">ISO</div>
<div class="a dd" style="left:402.5px;top:196px;border-top-color:#555"></div>
<!-- list -->
<div class="a" style="left:241.2px;top:219px;width:85.5px;height:303px;border:1px solid #dfe1e4"></div>
<div class="a" style="left:242.5px;top:220px;width:82.5px;height:14px;background:#bdeefc"></div>
<div class="a t" style="left:247px;top:222px;font-weight:bold;color:#30363c;letter-spacing:-0.2px">Fillet</div>
<div class="a t" style="left:247px;top:237px;color:#505050">Butt</div>
<div class="a t" style="left:247px;top:251.5px;color:#505050">Plug/Slot</div>
<div class="a t" style="left:247px;top:266px;color:#505050">Spot</div>
<div class="a t" style="left:247px;top:281px;color:#505050">General</div>
<!-- tab panel -->
<div class="a" style="left:331.5px;top:237px;width:221.5px;height:285px;border:1px solid #dfe1e4"></div>
<div class="a" style="left:331.5px;top:218.5px;width:205px;height:19px;border:1px solid #dfe1e4;border-bottom:none;background:#fff"></div>
<div class="a" style="left:332.5px;top:236.5px;width:37px;height:2px;background:#fff"></div>
<div class="a" style="left:369.5px;top:219.5px;width:1px;height:18px;background:#dfe1e4"></div>
<div class="a" style="left:430px;top:219.5px;width:1px;height:18px;background:#e6e8ea"></div>
<div class="a" style="left:475.5px;top:219.5px;width:1px;height:18px;background:#e6e8ea"></div>
<div class="a t" style="left:331.5px;top:223.8px;width:38px;text-align:center;color:#3a3a3a">Shape</div>
<div class="a t" style="left:370px;top:223.8px;width:60px;text-align:center;color:#808488">Intermittent</div>
<div class="a t" style="left:431px;top:223.8px;width:45px;text-align:center;color:#808488">Options</div>
<div class="a" style="left:535.5px;top:223.5px;width:15.5px;height:10px;border:1px solid #eceef0"></div>
<div class="a" style="left:543px;top:224px;width:1px;height:9px;background:#eceef0"></div>
<div class="a" style="left:537.5px;top:226px;width:0;height:0;border-top:2.5px solid transparent;border-bottom:2.5px solid transparent;border-right:3px solid #c8ccd0"></div>
<div class="a" style="left:546px;top:226px;width:0;height:0;border-top:2.5px solid transparent;border-bottom:2.5px solid transparent;border-left:3px solid #9ca0a4"></div>
<!-- shape buttons -->
<div class="a" style="left:339.3px;top:247.4px;width:152.5px;height:18.5px;border:1px solid #d0d3d6"></div>
<div class="a" style="left:340.3px;top:248.4px;width:29px;height:16.5px;background:#eef0f4"></div>
<div class="a" style="left:369.5px;top:248px;width:1px;height:17.5px;background:#d0d3d6"></div>
<div class="a" style="left:399.4px;top:248px;width:1px;height:17.5px;background:#d0d3d6"></div>
<div class="a" style="left:430.7px;top:248px;width:1px;height:17.5px;background:#d0d3d6"></div>
<div class="a" style="left:461.3px;top:248px;width:1px;height:17.5px;background:#d0d3d6"></div>
<div class="a t" style="left:340px;top:251.5px;width:29.5px;text-align:center;color:#505050">A</div>
<div class="a t" style="left:370px;top:251.5px;width:29.5px;text-align:center;color:#505050">Z</div>
<div class="a t" style="left:400px;top:251.5px;width:30.5px;text-align:center;color:#505050;letter-spacing:-0.3px">Z1xZ2</div>
<svg style="left:440px;top:250px" width="13" height="11" viewBox="0 0 13 11"><path d="M0.5 10.5L7 3.5V10.5Z" fill="none" stroke="#707478" stroke-width="0.8"/><path d="M9 1V8M7.5 6.5L9 8.5L10.5 6.5M7.5 2.5L9 0.5L10.5 2.5" stroke="#40454b" stroke-width="0.9" fill="none"/></svg>
<svg style="left:470.5px;top:250.5px" width="12" height="12" viewBox="0 0 12 12"><circle cx="6" cy="6" r="4.8" fill="none" stroke="#555" stroke-width="1"/><path d="M2.7 2.7L9.3 9.3" stroke="#555" stroke-width="1"/></svg>
<svg style="left:383.5px;top:253px" width="11" height="15" viewBox="0 0 11 15"><path d="M1 0.5V12L3.8 9.5L6 14L8 13L5.8 8.8H9.5Z" fill="#fff" stroke="#111" stroke-width="0.9" stroke-linejoin="round"/></svg>
<!-- weld diagram -->
<svg style="left:0;top:0" width="1366" height="400" viewBox="0 0 1366 400">
 <rect x="360.5" y="284" width="15.3" height="75" fill="#c9c9cc" stroke="#a4a4a8" stroke-width="0.8"/>
 <rect x="360.5" y="358.8" width="90.2" height="14.3" fill="#e6e6e6" stroke="#acacac" stroke-width="0.8"/>
 <path d="M375.8 300.5V358.5H433Z" fill="#f8cc8a"/>
 <path d="M405 330L421.6 313.4H467.4" fill="none" stroke="#c4c4c4" stroke-width="0.7"/>
 <path d="M376.8 357.6L405 330" stroke="#2c5f6c" stroke-width="0.9"/>
 <path d="M376.5 358L377.2 354.5L380.3 355.2Z" fill="#2c5f6c"/>
 <path d="M405 330L401 331.5L403.5 334Z" fill="#2c5f6c"/>
 <path d="M399.5 325.8L407.5 334" stroke="#2c5f6c" stroke-width="0.9"/>
</svg>
<div class="a" style="left:467.4px;top:302.2px;width:50.3px;height:21.3px;border:1px solid #d8dbde;background:#fff"></div>
<div class="a" style="left:504px;top:303px;width:1px;height:20px;background:#e0e2e4"></div>
<div class="a t" style="left:472.4px;top:308.4px;color:#707070;font-size:7.8px">0.500</div>
<div class="a dd" style="left:507.5px;top:312px;border-top-color:#555"></div>
<!-- buttons -->
<div class="a" style="left:241.1px;top:533.1px;width:42.7px;height:18.3px;border:1px solid #d0d3d6"></div>
<div class="a t" style="left:241.1px;top:537.5px;width:42.7px;text-align:center;color:#505050">Open...</div>
<div class="a" style="left:288.3px;top:533.1px;width:39.4px;height:18.3px;border:1px solid #d0d3d6"></div>
<div class="a t" style="left:288.3px;top:537.5px;width:39.4px;text-align:center;color:#505050">Save...</div>
<div class="a" style="left:234px;top:563.3px;width:327px;height:1px;background:#dfe1e4"></div>
<div class="a" style="left:464.6px;top:571.2px;width:41.7px;height:18.3px;background:#aaeafd;border:1px solid #98def6"></div>
<div class="a t" style="left:464.6px;top:575.5px;width:41.7px;text-align:center;color:#3a5a6a">OK</div>
<div class="a" style="left:511.2px;top:571.2px;width:41.5px;height:18.3px;border:1px solid #d0d3d6;background:#fff"></div>
<div class="a t" style="left:511.2px;top:575.5px;width:41.5px;text-align:center;color:#505050">Cancel</div>
<!-- status bar -->
<div class="a" style="left:18px;top:726px;width:1329px;height:1px;background:#d0d3d6"></div>
<div class="a" style="left:22px;top:736px;width:18px;height:19px;border:1px solid #c6cacd;background:#f4f6f9"></div>
<svg style="left:26px;top:739px" width="12" height="13" viewBox="0 0 12 13"><rect x="1.5" y="1.5" width="9.5" height="10" fill="none" stroke="#e0e0e0" stroke-width="0.7"/><rect x="0.5" y="3" width="3" height="8.5" fill="#fff" stroke="#3a8ad0" stroke-width="0.9"/><ellipse cx="8" cy="10" rx="3.2" ry="1.8" fill="#4a4f55"/><circle cx="8" cy="10" r="0.8" fill="#fff"/></svg>
<svg style="left:45px;top:738px" width="13" height="13" viewBox="0 0 13 13"><circle cx="7.5" cy="5.5" r="4.5" fill="#3a9ae0"/><path d="M4 4Q7 2 11 5" stroke="#a8d8f8" stroke-width="1" fill="none"/><path d="M1 11Q4 12 7 9" stroke="#555" stroke-width="1.2" fill="none"/><circle cx="2" cy="10" r="1.5" fill="none" stroke="#555" stroke-width="0.9"/></svg>
<svg style="left:66px;top:738px" width="13" height="14" viewBox="0 0 13 14"><rect x="0.5" y="0.5" width="12" height="12.5" fill="#fff" stroke="#a8c8e0" stroke-width="0.8"/><path d="M1 13H12.5V1" stroke="#3a8ad0" stroke-width="1.2" fill="none"/></svg>
<div class="a" style="left:88px;top:735px;width:1px;height:20px;background:#d0d3d6"></div>
<div class="a" style="left:96px;top:742.8px;width:2.5px;height:2.5px;border-radius:50%;background:#1f5fa0"></div>
<div class="a t" style="left:102.5px;top:739px;color:#404040;font-size:7.9px">Part 'WELD_5' not changed since last regen.</div>
<div class="a" style="left:1058px;top:733px;width:1px;height:22px;background:#d8dbde"></div>
<div class="a" style="left:1081.5px;top:733px;width:1px;height:22px;background:#d8dbde"></div>
<div class="a" style="left:1084px;top:734px;width:38px;height:21px;border:1px solid #e4e6e8;border-left-color:#d8dbde"></div>
<div class="a" style="left:1107px;top:735px;width:1px;height:19px;background:#eceef0"></div>
<svg style="left:1092px;top:738px" width="12" height="11" viewBox="0 0 12 11"><path d="M1 4L2 1H4.5V4.5H7.5V1H10L11 4L11.5 10H7V6H5V10H0.5Z" fill="#40454b"/></svg>
<div class="a dd" style="left:1111.5px;top:743px;border-top-color:#555"></div>
<div class="a" style="left:1125px;top:733.5px;width:30px;height:21.5px;border:1px solid #d8dbde"></div>
<svg style="left:1133px;top:737px" width="14" height="14" viewBox="0 0 14 14"><rect x="3.5" y="0.5" width="10" height="9.5" fill="#e8eaec" stroke="#707478" stroke-width="0.8"/><rect x="0.5" y="3.5" width="10" height="10" fill="#f6f0e0" stroke="#707478" stroke-width="0.8"/><path d="M3 11L7 6L9 8" stroke="#3a9ae0" stroke-width="1.4" fill="none"/><rect x="4" y="5" width="5" height="4" fill="#6ab8ec" opacity="0.8"/></svg>
<div class="a" style="left:1218px;top:734.5px;width:116px;height:20.5px;border:1px solid #d8dbde;background:#fff"></div>
<div class="a" style="left:1321px;top:735px;width:1px;height:19.5px;background:#d8dbde"></div>
<div class="a t" style="left:1224.5px;top:739.5px;color:#555;font-size:8.1px">Geometry</div>
<div class="a dd" style="left:1324.5px;top:743px;border-top-color:#555"></div>
</body></html>
